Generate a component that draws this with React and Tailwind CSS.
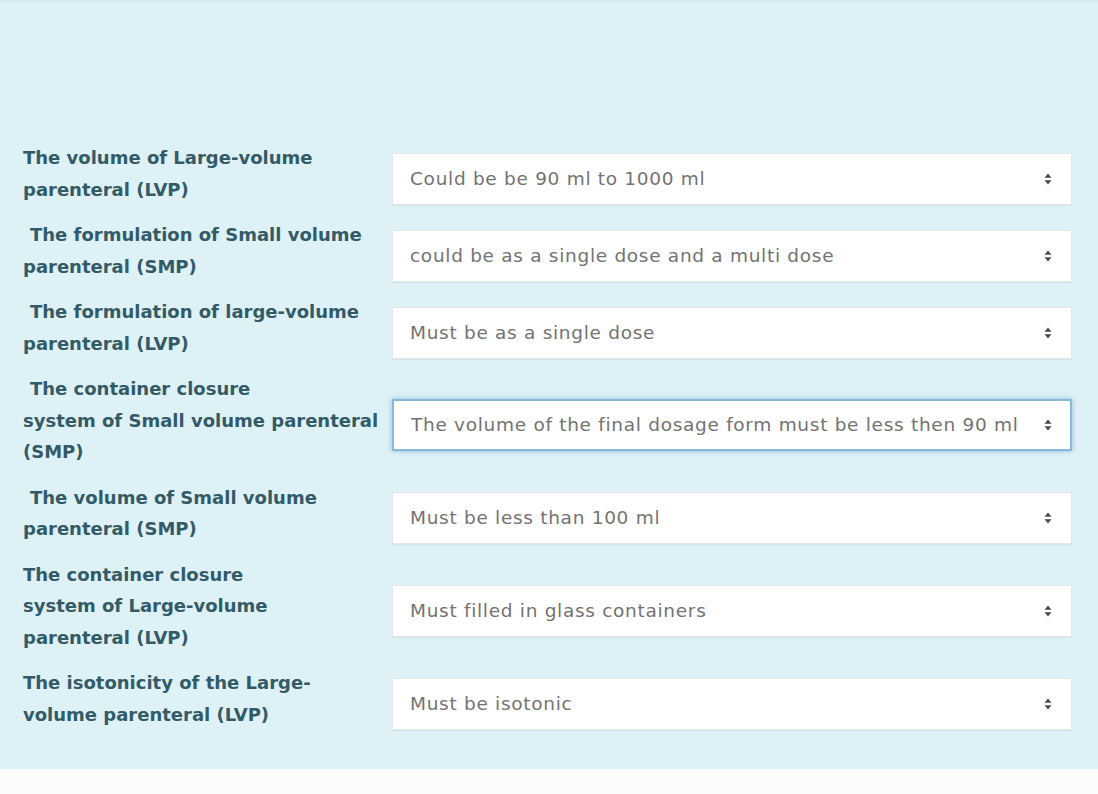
import { useState } from 'react';

// Matching question: each row pairs a term with a dropdown of statements.
// `indent` marks a first line that starts one space in.
const rows = [
  { lines: ['The volume of Large-volume', 'parenteral (LVP)'], value: 'Could be be 90 ml to 1000 ml' },
  { lines: ['The formulation of Small volume', 'parenteral (SMP)'], value: 'could be as a single dose and a multi dose', indent: true },
  { lines: ['The formulation of large-volume', 'parenteral (LVP)'], value: 'Must be as a single dose', indent: true },
  { lines: ['The container closure', 'system of Small volume parenteral', '(SMP)'], value: 'The volume of the final dosage form must be less then 90 ml', indent: true, focused: true },
  { lines: ['The volume of Small volume', 'parenteral (SMP)'], value: 'Must be less than 100 ml', indent: true },
  { lines: ['The container closure', 'system of Large-volume', 'parenteral (LVP)'], value: 'Must filled in glass containers' },
  { lines: ['The isotonicity of the Large-', 'volume parenteral (LVP)'], value: 'Must be isotonic' }
];

const options = [
  'Could be be 90 ml to 1000 ml',
  'could be as a single dose and a multi dose',
  'Must be as a single dose',
  'The volume of the final dosage form must be less then 90 ml',
  'Must be less than 100 ml',
  'Must filled in glass containers',
  'Must be isotonic'
];

function SortArrows() {
  return (
    <svg width="8" height="12" viewBox="0 0 8 12" className="absolute right-[20px] top-1/2 -translate-y-1/2 pointer-events-none">
      <path d="M4 0.5 L7.5 4.8 L0.5 4.8 Z" fill="#4a4a4a" />
      <path d="M4 11.5 L7.5 7.2 L0.5 7.2 Z" fill="#4a4a4a" />
    </svg>
  );
}

function MatchRow({ row }) {
  const [value, setValue] = useState(row.value);

  return (
    <div className="flex items-center">
      <div className="w-[369px] shrink-0 pb-2.5 text-[18px] leading-[31.5px] font-bold text-[#335b67] whitespace-nowrap">
        {row.lines.map((line, i) => (
          <div key={i} className={i === 0 && row.indent ? 'pl-[7px]' : ''}>{line}</div>
        ))}
      </div>
      <div className="relative w-[680px]">
        <select
          value={value}
          onChange={(e) => setValue(e.target.value)}
          className={`w-full h-[52px] appearance-none bg-white pl-[17px] pr-10 text-[18.5px] tracking-[0.7px] text-[#737373] outline-none ${
            row.focused
              ? 'border-2 border-[#8ab8da] shadow-[0_0_5px_rgba(90,150,200,0.6)]'
              : 'border border-[#e3e8ea] shadow-[0_1px_1px_rgba(0,0,0,0.05)]'
          }`}
        >
          {options.map((o) => (
            <option key={o} value={o}>{o}</option>
          ))}
        </select>
        <SortArrows />
      </div>
    </div>
  );
}

export default function App() {
  return (
    <div className="w-[1098px] h-[794px] bg-[#fbfdfd] font-['DejaVu_Sans',sans-serif]">
      <div className="bg-[#def1f7] pt-[140px] pb-[29px] pl-[23px] flex flex-col gap-[4px] border-t-2 border-[#d6eaf1]">
        {rows.map((row, i) => (
          <MatchRow key={i} row={row} />
        ))}
      </div>
    </div>
  );
}
